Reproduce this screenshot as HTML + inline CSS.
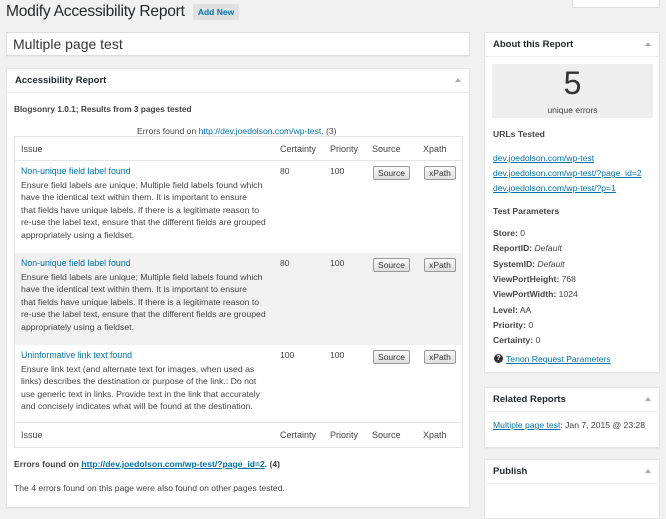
<!DOCTYPE html>
<html><head><meta charset="utf-8"><style>
*{margin:0;padding:0;box-sizing:border-box}
body{width:666px;height:500px;overflow:hidden;background:#f1f1f1;font-family:"Liberation Sans",sans-serif;color:#444;position:relative;font-size:8.6px}
.a{position:absolute;white-space:nowrap}
.box{position:absolute;background:#fff;border:1px solid #e5e5e5;box-shadow:0 1px 1px rgba(0,0,0,.04)}
.hd{position:absolute;left:0;right:0;top:0;height:24px;border-bottom:1px solid #eee}
.hd b{position:absolute;left:8px;top:6px;font-size:9.5px;color:#23282d}
.tri{position:absolute;right:8px;top:9px;width:0;height:0;border-left:3px solid transparent;border-right:3px solid transparent;border-bottom:4px solid #aaa}
a,.l{color:#0073aa}
u{color:#0073aa}
.btn{position:absolute;height:14px;border:1px solid #999;border-radius:2px;background:linear-gradient(#fafafa,#ddd);font-size:8.5px;color:#333;text-align:center;line-height:12px}
.desc{position:absolute;left:21px;line-height:12.4px;font-size:8.7px;white-space:nowrap;color:#444}
.b{font-weight:bold}
</style></head><body>
<div class="a" style="left:6px;top:3px;font-size:15.6px;letter-spacing:-0.25px;color:#23282d">Modify Accessibility Report</div>
<div class="a" style="left:193px;top:4px;width:46px;height:16px;background:#e0e0e0;border-radius:2px;font-size:8.5px;font-weight:bold;color:#0073aa;text-align:center;line-height:16px">Add New</div>
<div class="a" style="left:572px;top:-8px;width:88px;height:16px;background:#fff;border:1px solid #ddd"></div>
<div class="box" style="left:6px;top:32px;width:464px;height:24px;border-color:#ddd"><div class="a" style="left:6px;top:3px;font-size:14px;color:#333">Multiple page test</div></div>

<div class="box" style="left:6px;top:68px;width:464px;height:440px">
<div class="hd"><b>Accessibility Report</b><div class="tri"></div></div>
</div>
<div class="a b" style="left:14px;top:104px;font-size:8.3px">Blogsonry 1.0.1; Results from 3 pages tested</div>
<div class="a" style="left:137px;top:126px">Errors found on <span class="l">http://dev.joedolson.com/wp-test.</span> (3)</div>
<div class="a" style="left:14px;top:136px;width:449px;height:312px;border:1px solid #e5e5e5;background:#fff"></div>
<div class="a" style="left:15px;top:253px;width:447px;height:92px;background:#f1f1f1"></div>
<div class="a" style="left:15px;top:160px;width:447px;height:1px;background:#e5e5e5"></div>
<div class="a" style="left:15px;top:422px;width:447px;height:1px;background:#e5e5e5"></div>
<div class="a" style="left:21px;top:144px;font-size:9px">Issue</div><div class="a" style="left:280px;top:144px;font-size:9px">Certainty</div><div class="a" style="left:330px;top:144px;font-size:9px">Priority</div><div class="a" style="left:372px;top:144px;font-size:9px">Source</div><div class="a" style="left:423px;top:144px;font-size:9px">Xpath</div>
<div class="a" style="left:21px;top:430px;font-size:9px">Issue</div><div class="a" style="left:280px;top:430px;font-size:9px">Certainty</div><div class="a" style="left:330px;top:430px;font-size:9px">Priority</div><div class="a" style="left:372px;top:430px;font-size:9px">Source</div><div class="a" style="left:423px;top:430px;font-size:9px">Xpath</div>

<div class="a l" style="left:21px;top:166px;font-size:8.8px">Non-unique field label found</div>
<div class="desc" style="top:179px">Ensure field labels are unique; Multiple field labels found which<br>have the identical text within them. It is important to ensure<br>that fields have unique labels. If there is a legitimate reason to<br>re-use the label text, ensure that the different fields are grouped<br>appropriately using a fieldset.</div>
<div class="a" style="left:280px;top:166px">80</div><div class="a" style="left:330px;top:166px">100</div>
<div class="btn" style="left:373px;top:166px;width:37px">Source</div><div class="btn" style="left:424px;top:166px;width:32px">xPath</div>

<div class="a l" style="left:21px;top:258px;font-size:8.8px">Non-unique field label found</div>
<div class="desc" style="top:271px">Ensure field labels are unique; Multiple field labels found which<br>have the identical text within them. It is important to ensure<br>that fields have unique labels. If there is a legitimate reason to<br>re-use the label text, ensure that the different fields are grouped<br>appropriately using a fieldset.</div>
<div class="a" style="left:280px;top:258px">80</div><div class="a" style="left:330px;top:258px">100</div>
<div class="btn" style="left:373px;top:258px;width:37px">Source</div><div class="btn" style="left:424px;top:258px;width:32px">xPath</div>

<div class="a l" style="left:21px;top:350px;font-size:8.8px">Uninformative link text found</div>
<div class="desc" style="top:363px">Ensure link text (and alternate text for images, when used as<br>links) describes the destination or purpose of the link.: Do not<br>use generic text in links. Provide text in the link that accurately<br>and concisely indicates what will be found at the destination.</div>
<div class="a" style="left:280px;top:350px">100</div><div class="a" style="left:330px;top:350px">100</div>
<div class="btn" style="left:373px;top:350px;width:37px">Source</div><div class="btn" style="left:424px;top:350px;width:32px">xPath</div>

<div class="a b" style="left:14px;top:459px">Errors found on <u>http://dev.joedolson.com/wp-test/?page_id=2</u>. (4)</div>
<div class="a" style="left:14px;top:483px">The 4 errors found on this page were also found on other pages tested.</div>

<div class="box" style="left:484px;top:32px;width:176px;height:341px">
<div class="hd"><b>About this Report</b><div class="tri"></div></div>
<div class="a" style="left:7px;top:31px;width:161px;height:54px;background:#eee"></div>
<div class="a" style="left:7px;top:32px;width:161px;text-align:center;font-size:32px;color:#333">5</div>
<div class="a" style="left:7px;top:72px;width:161px;text-align:center;font-size:8.5px">unique errors</div>
<div class="a b" style="left:8px;top:96px">URLs Tested</div>
<div class="a" style="left:8px;top:120px"><u>dev.joedolson.com/wp-test</u></div>
<div class="a" style="left:8px;top:135px"><u>dev.joedolson.com/wp-test/?page_id=2</u></div>
<div class="a" style="left:8px;top:150px"><u>dev.joedolson.com/wp-test/?p=1</u></div>
<div class="a b" style="left:8px;top:173px">Test Parameters</div>
<div class="a" style="left:8px;top:195px"><b>Store:</b> 0</div>
<div class="a" style="left:8px;top:210px"><b>ReportID:</b> <i>Default</i></div>
<div class="a" style="left:8px;top:226px"><b>SystemID:</b> <i>Default</i></div>
<div class="a" style="left:8px;top:241px"><b>ViewPortHeight:</b> 768</div>
<div class="a" style="left:8px;top:256px"><b>ViewPortWidth:</b> 1024</div>
<div class="a" style="left:8px;top:272px"><b>Level:</b> AA</div>
<div class="a" style="left:8px;top:287px"><b>Priority:</b> 0</div>
<div class="a" style="left:8px;top:302px"><b>Certainty:</b> 0</div>
<div class="a" style="left:9px;top:321px;width:9px;height:9px;border-radius:50%;background:#333;color:#fff;font-size:7px;text-align:center;line-height:9px;font-weight:bold">?</div>
<div class="a" style="left:21px;top:321px"><u>Tenon Request Parameters</u></div>
</div>

<div class="box" style="left:484px;top:387px;width:176px;height:61px">
<div class="hd"><b>Related Reports</b><div class="tri"></div></div>
<div class="a" style="left:8px;top:32px"><u>Multiple page test</u>: Jan 7, 2015 @ 23:28</div>
</div>
<div class="box" style="left:484px;top:459px;width:176px;height:60px">
<div class="hd"><b>Publish</b><div class="tri"></div></div>
</div>
</body></html>
